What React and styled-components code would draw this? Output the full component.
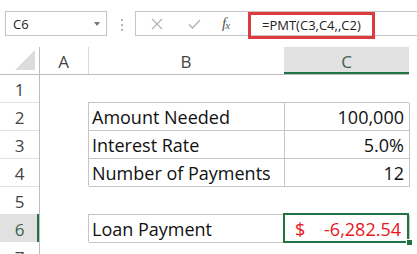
import React from "react";
import styled, { createGlobalStyle } from "styled-components";

const GREEN = "#217346";
const LINE = "#c6c6c6";

const GlobalStyle = createGlobalStyle`
  html, body {
    margin: 0;
    padding: 0;
    background: #fff;
  }
  body {
    font-family: "Open Sans", "Liberation Sans", sans-serif;
    width: 417px;
    height: 254px;
    overflow: hidden;
  }
`;

const FormulaBar = styled.div`
  display: flex;
  align-items: flex-start;
  height: 47px;
  box-sizing: border-box;
  padding: 11px 0 0 5px;
`;

const NameBox = styled.div`
  width: 102px;
  height: 25px;
  box-sizing: border-box;
  border: 1px solid ${LINE};
  display: flex;
  align-items: center;
  justify-content: space-between;
  padding: 0 6px 0 7px;
  font-size: 13px;
  color: #222;
`;

const DropArrow = styled.span`
  width: 0;
  height: 0;
  border-left: 3.5px solid transparent;
  border-right: 3.5px solid transparent;
  border-top: 4px solid #777;
  margin-top: 1px;
`;

const Dots = styled.div`
  display: flex;
  flex-direction: column;
  gap: 3px;
  margin: 8px 12px 0 14px;
`;

const Dot = styled.span`
  width: 2px;
  height: 2px;
  background: #b5b5b5;
`;

const FxBox = styled.div`
  flex: 1;
  display: flex;
  align-items: flex-start;
  height: 25px;
  box-sizing: border-box;
  border: 1px solid ${LINE};
  border-right: none;
`;

const IconArea = styled.div`
  width: 112px;
  height: 23px;
  display: flex;
  align-items: center;
  padding-left: 15px;
  box-sizing: border-box;
  gap: 25px;
`;

const Fx = styled.span`
  font-family: "Liberation Serif", "DejaVu Serif", serif;
  font-style: italic;
  font-size: 15px;
  color: #555;
  margin-left: -4px;
  letter-spacing: -1px;

  sub {
    font-size: 11px;
    vertical-align: -1px;
  }
`;

const FormulaInput = styled.div`
  width: 127px;
  height: 27px;
  box-sizing: border-box;
  border: 3px solid #df3a3f;
  display: flex;
  align-items: center;
  padding: 0 0 1px 11px;
  font-size: 13px;
  color: #222;
  white-space: nowrap;
`;

const Sheet = styled.div`
  display: grid;
  grid-template-columns: 39px 49px 196px 125px 1fr;
  grid-template-rows: 27px repeat(7, 28px);
`;

const Corner = styled.div`
  display: flex;
  align-items: flex-end;
  justify-content: flex-end;
  padding: 0 4px 4px 0;
  box-shadow: 1px 0 0 #bdbdbd, 0 1px 0 #bdbdbd;
`;

const CornerTriangle = styled.span`
  width: 0;
  height: 0;
  border-left: 20px solid transparent;
  border-bottom: 20px solid #dcdcdc;
`;

const ColHead = styled.div`
  display: flex;
  align-items: center;
  justify-content: center;
  font-size: 17px;
  color: ${(p) => (p.$selected ? "#3f5f4e" : "#444")};
  background: ${(p) => (p.$selected ? "#e1e1e1" : "transparent")};
  box-shadow: ${(p) =>
    p.$selected
      ? `inset 0 -2px 0 ${GREEN}, 0 1px 0 #bdbdbd`
      : "1px 0 0 #dadada, 0 1px 0 #bdbdbd"};
  padding-top: 1px;
`;

const RowHead = styled.div`
  display: flex;
  align-items: center;
  justify-content: center;
  font-size: 17px;
  padding-top: 2px;
  box-sizing: border-box;
  color: ${(p) => (p.$selected ? "#3f5f4e" : "#444")};
  background: ${(p) => (p.$selected ? "#e1e1e1" : "transparent")};
  box-shadow: ${(p) =>
    p.$selected
      ? `inset -2px 0 0 ${GREEN}, 1px 0 0 #bdbdbd`
      : "1px 0 0 #bdbdbd, 0 1px 0 #e1e1e1"};
`;

const Cell = styled.div`
  position: relative;
  display: flex;
  align-items: center;
  justify-content: ${(p) => (p.$align === "right" ? "flex-end" : "flex-start")};
  padding: 2px 5px 0 4px;
  font-size: 18px;
  color: #111;
  white-space: nowrap;
  box-shadow: ${(p) =>
    p.$boxed ? `inset 1px 1px 0 ${LINE}, 1px 1px 0 ${LINE}` : "none"};
`;

const MoneyCell = styled(Cell)`
  justify-content: space-between;
  padding: 2px 8px 0 11px;
  color: #e8161b;
`;

const Selection = styled.div`
  position: absolute;
  top: -1px;
  left: -1px;
  right: 0;
  bottom: -1px;
  border: 2px solid ${GREEN};
  pointer-events: none;
`;

const FillHandle = styled.span`
  position: absolute;
  right: -4px;
  bottom: -4px;
  width: 5px;
  height: 5px;
  background: ${GREEN};
  border: 1px solid #fff;
`;

const Empty = styled.div``;

const rows = [
  { n: 1 },
  { n: 2, label: "Amount Needed", value: "100,000" },
  { n: 3, label: "Interest Rate", value: "5.0%" },
  { n: 4, label: "Number of Payments", value: "12" },
  { n: 5 },
  { n: 6, label: "Loan Payment", money: true },
  { n: 7 },
];

function CrossIcon() {
  return (
    <svg width="12" height="12" viewBox="0 0 12 12">
      <path d="M1 1 L11 11 M11 1 L1 11" stroke="#b3b3b3" strokeWidth="1.3" fill="none" />
    </svg>
  );
}

function CheckIcon() {
  return (
    <svg width="13" height="10" viewBox="0 0 13 10">
      <path d="M1 5.5 L4.5 9 L12 1" stroke="#b3b3b3" strokeWidth="1.4" fill="none" />
    </svg>
  );
}

export default function App() {
  return (
    <>
      <GlobalStyle />
      <FormulaBar>
        <NameBox>
          C6
          <DropArrow />
        </NameBox>
        <Dots>
          <Dot />
          <Dot />
          <Dot />
        </Dots>
        <FxBox>
          <IconArea>
            <CrossIcon />
            <CheckIcon />
            <Fx>
              f<sub>x</sub>
            </Fx>
          </IconArea>
          <FormulaInput>=PMT(C3,C4,,C2)</FormulaInput>
        </FxBox>
      </FormulaBar>

      <Sheet>
        <Corner>
          <CornerTriangle />
        </Corner>
        <ColHead>A</ColHead>
        <ColHead>B</ColHead>
        <ColHead $selected>C</ColHead>
        <Empty />

        {rows.map((r) => (
          <React.Fragment key={r.n}>
            <RowHead $selected={r.n === 6}>{r.n}</RowHead>
            <Empty />
            {r.label ? <Cell $boxed>{r.label}</Cell> : <Empty />}
            {r.money ? (
              <MoneyCell $boxed>
                <span>$</span>
                <span>-6,282.54</span>
                <Selection />
                <FillHandle />
              </MoneyCell>
            ) : r.value ? (
              <Cell $boxed $align="right">
                {r.value}
              </Cell>
            ) : (
              <Empty />
            )}
            <Empty />
          </React.Fragment>
        ))}
      </Sheet>
    </>
  );
}
